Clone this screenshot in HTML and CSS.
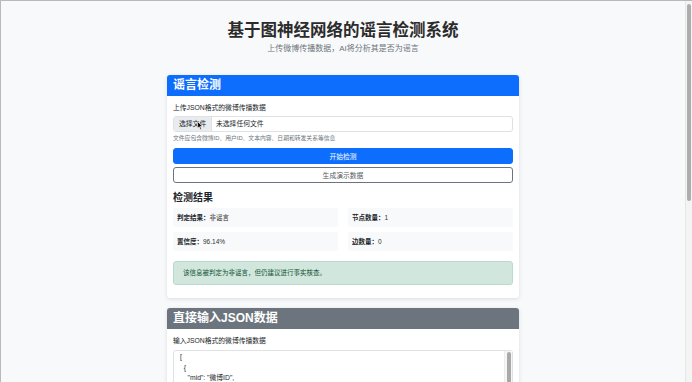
FILE: index.html
```html
<!DOCTYPE html>
<html lang="zh-CN">
<head>
  <meta charset="UTF-8" />
  <meta name="viewport" content="width=device-width, initial-scale=1.0"/>
  <title>基于图神经网络的谣言检测系统</title>
  <link rel="stylesheet" href="styles.css">
</head>
<body>
  <div class="frame">
    <main class="page">
      <header class="intro">
        <h1>基于图神经网络的谣言检测系统</h1>
        <p>上传微博传播数据，AI将分析其是否为谣言</p>
      </header>

      <section class="card">
        <div class="card-header header-blue">谣言检测</div>
        <div class="card-body">
          <label class="form-label">上传JSON格式的微博传播数据</label>
          <div class="file-input">
            <span class="file-btn">选择文件
              <svg class="cursor" width="6" height="9" viewBox="0 0 10 15">
                <path d="M1 1 L1 12 L3.6 9.6 L5.6 14 L7.4 13.2 L5.4 8.9 L9 8.9 Z" fill="#000" stroke="#fff" stroke-width="1"/>
              </svg>
            </span>
            <span class="file-name">未选择任何文件</span>
          </div>
          <div class="form-text">文件应包含微博ID、用户ID、文本内容、日期和转发关系等信息</div>

          <button class="btn btn-primary">开始检测</button>
          <button class="btn btn-outline">生成演示数据</button>

          <h4 class="result-title">检测结果</h4>
          <div class="result-grid">
            <div class="cell"><strong>判定结果：</strong>非谣言</div>
            <div class="cell"><strong>节点数量：</strong>1</div>
            <div class="cell"><strong>置信度：</strong>96.14%</div>
            <div class="cell"><strong>边数量：</strong>0</div>
          </div>
          <div class="alert">该信息被判定为非谣言，但仍建议进行事实核查。</div>
        </div>
      </section>

      <section class="card">
        <div class="card-header header-gray">直接输入JSON数据</div>
        <div class="card-body">
          <label class="form-label">输入JSON格式的微博传播数据</label>
          <div class="textarea">
            <pre class="code">[
  {
    "mid": "微博ID",</pre>
            <div class="ta-scroll"><div class="ta-thumb"></div></div>
          </div>
        </div>
      </section>
    </main>
    <div class="scrollbar"><div class="thumb"></div></div>
  </div>
</body>
</html>
```

FILE: styles.css
```css
:root {
  --primary: #0d6efd;
  --secondary: #6c757d;
  --text: #212529;
  --bg: #f8f9fa;
  --radius: 3px;
}
* { box-sizing: border-box; }
html, body { margin: 0; padding: 0; height: 100%; overflow: hidden; }
body {
  font-family: "Liberation Sans", "Noto Sans CJK SC", sans-serif;
  color: var(--text);
  background: var(--bg);
}
.frame {
  display: flex;
  height: 100vh;
  border-top: 1px solid #b9b9b9;
  border-left: 1px solid #b9b9b9;
}
.page { flex: 1; overflow: hidden; }
.scrollbar {
  width: 7px;
  background: #f4f4f4;
  border-left: 1px solid #e6e6e6;
  padding-top: 3px;
}
.thumb {
  width: 4px;
  height: 197px;
  margin-left: 1px;
  background: #adadad;
  border-radius: 2px;
}

.intro { text-align: center; margin-top: 19px; }
.intro h1 {
  margin: 0;
  font-size: 16.5px;
  line-height: 20px;
  font-weight: 700;
  color: #2b2b2b;
}
.intro p {
  margin: 3px 0 0;
  font-size: 8px;
  line-height: 12px;
  color: var(--secondary);
}

.card {
  width: 352px;
  margin: 20px auto 0;
  background: #fff;
  border-radius: var(--radius);
  box-shadow: 0 1px 4px rgba(0,0,0,0.12);
}
.card + .card { margin-top: 10px; }
.card-header {
  height: 21px;
  line-height: 21px;
  padding: 0 6px;
  color: #fff;
  font-size: 12px;
  font-weight: 700;
  border-radius: var(--radius) var(--radius) 0 0;
}
.header-blue { background: var(--primary); }
.header-gray { background: var(--secondary); }
.card-body { padding: 7px 6px 13px; }

.form-label {
  display: block;
  font-size: 6.8px;
  line-height: 10px;
  margin-bottom: 3px;
}
.file-input {
  display: flex;
  height: 16px;
  border: 1px solid #dee2e6;
  border-radius: var(--radius);
  font-size: 6.8px;
  overflow: hidden;
}
.file-btn {
  position: relative;
  width: 38px;
  background: #e9ecef;
  border-right: 1px solid #dee2e6;
  line-height: 14px;
  padding-left: 5px;
}
.cursor { position: absolute; left: 23px; top: 4px; }
.file-name { line-height: 14px; padding-left: 4px; }
.form-text {
  margin-top: 2px;
  font-size: 5.8px;
  line-height: 8px;
  color: var(--secondary);
}

.btn {
  display: block;
  width: 100%;
  height: 16px;
  padding: 0;
  font-family: inherit;
  font-size: 6.8px;
  border-radius: var(--radius);
  cursor: pointer;
}
.btn-primary {
  margin-top: 6px;
  background: var(--primary);
  border: 1px solid var(--primary);
  color: #fff;
}
.btn-outline {
  margin-top: 3px;
  background: #fff;
  border: 1px solid var(--secondary);
  color: #555c63;
}

.result-title {
  margin: 8px 0 0;
  font-size: 10px;
  line-height: 13px;
  font-weight: 600;
}
.result-grid {
  display: grid;
  grid-template-columns: 1fr 1fr;
  gap: 5px 10px;
  margin-top: 4px;
}
.cell {
  height: 19px;
  line-height: 19px;
  padding-left: 4px;
  background: var(--bg);
  border-radius: 2px;
  font-size: 6.5px;
  color: #333;
}
.cell strong { font-weight: 700; color: var(--text); }
.alert {
  margin-top: 10px;
  height: 24px;
  line-height: 22px;
  padding: 0 9px;
  background: #d1e7dd;
  border: 1px solid #badbcc;
  border-radius: var(--radius);
  color: #0f5132;
  font-size: 6.5px;
}

.textarea {
  display: flex;
  margin-top: 4px;
  height: 80px;
  border: 1px solid #dee2e6;
  border-radius: var(--radius);
  background: #fff;
}
.code {
  flex: 1;
  margin: 0;
  padding: 1px 6px;
  font-family: inherit;
  font-size: 6.8px;
  line-height: 10.5px;
  color: var(--text);
}
.ta-scroll {
  width: 8px;
  padding: 1px 0 0 2px;
  background: #f6f6f6;
  border-left: 1px solid #ececec;
}
.ta-thumb {
  width: 4px;
  height: 60px;
  background: #a9a9a9;
  border-radius: 2px;
}
```
